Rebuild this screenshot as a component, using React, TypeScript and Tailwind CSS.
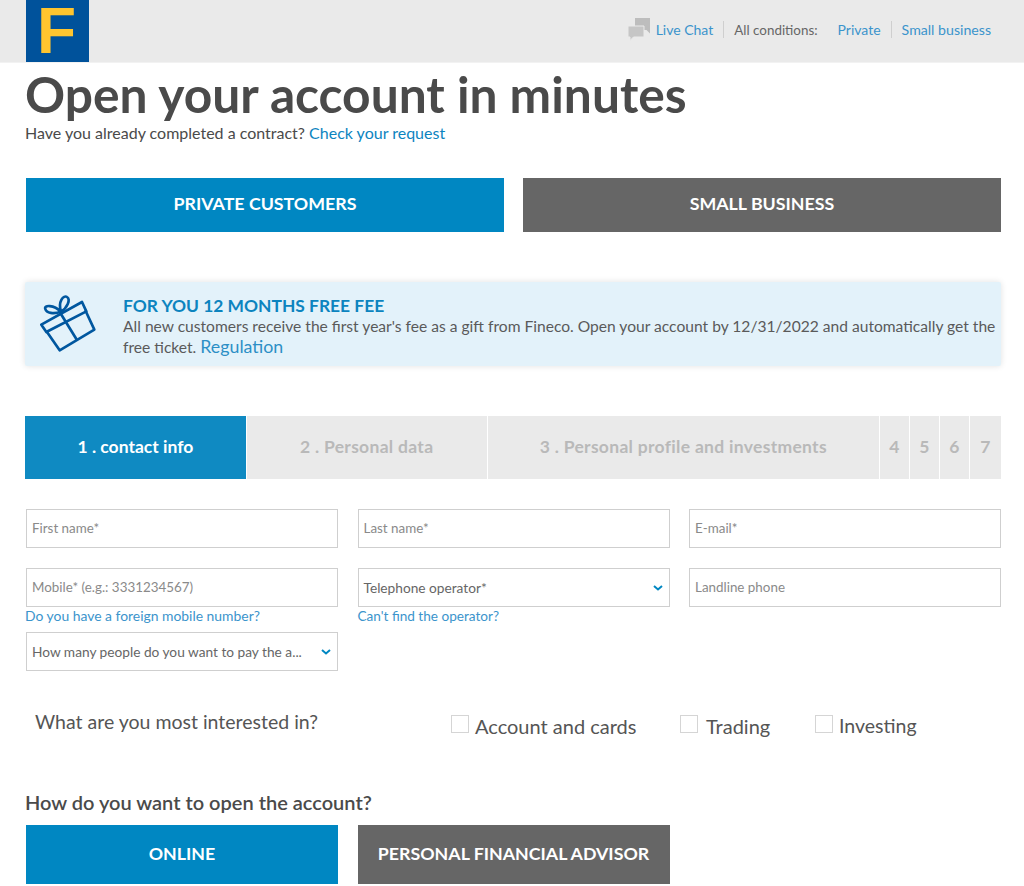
const font = { fontFamily: 'Lato, "Open Sans", "Liberation Sans", sans-serif' };

function ChevronDown() {
  return (
    <svg width="10" height="7" viewBox="0 0 10 7" className="absolute right-[6px] top-1/2 -translate-y-1/2">
      <path d="M1 1.5 L5 5 L9 1.5" fill="none" stroke="#0087c2" strokeWidth="2" />
    </svg>
  );
}

function ChatIcon() {
  return (
    <svg width="22" height="23" viewBox="0 0 22 23" className="mr-[6px] -mt-[1px]">
      <path d="M7 0 H22 V15.5 L18.5 12 H7 Z" fill="#bdbdbd" />
      <path d="M0 8 H16 V19 H5.5 L2 22.5 V19 H0 Z" fill="#c6c6c6" stroke="#eaeaea" strokeWidth="1" />
    </svg>
  );
}

function GiftIcon() {
  return (
    <svg width="60" height="60" viewBox="110 70 180 180" className="shrink-0 -mt-[2px]">
      <g fill="none" stroke="#00579f" strokeWidth="8" strokeLinejoin="round" strokeLinecap="round">
        <path d="M123 165 L245 97 L258 125 L138 187 Z" />
        <path d="M140 187 L178 242 L282 180 L256 124" />
        <path d="M180 130 L228 208" />
        <path d="M182 126 C160 105 130 105 135 118 C138 130 160 134 182 126 Z" />
        <path d="M182 126 C172 95 190 75 200 82 C212 90 200 115 182 126 Z" />
      </g>
    </svg>
  );
}

function TextInput({ placeholder }: { placeholder: string }) {
  return (
    <input
      placeholder={placeholder}
      className="w-full h-[39px] border border-[#cfcfcf] bg-white px-[5px] pb-[1px] text-[13.4px] outline-none placeholder:text-[#8a8a8a]"
    />
  );
}

function SelectBox({ label }: { label: string }) {
  return (
    <div className="relative w-full h-[39px] border border-[#cfcfcf] bg-white pl-[5px] pr-[20px] pt-[1px] flex items-center text-[13.7px] text-[#666] whitespace-nowrap">
      {label}
      <ChevronDown />
    </div>
  );
}

function Check({ label, className, labelClass }: { label: string; className: string; labelClass: string }) {
  return (
    <div className={"flex items-start " + className}>
      <span className="w-[18px] h-[18px] border border-[#d5d5d5] mr-[6px]" />
      <span className={"leading-[24px] text-[#555] -mt-[1px] " + labelClass}>{label}</span>
    </div>
  );
}

const tabs = [
  { label: "2 . Personal data", w: "w-[240px]" },
  { label: "3 . Personal profile and investments", w: "w-[392px]" },
  { label: "4", w: "w-[29px]" },
  { label: "5", w: "w-[29px]" },
  { label: "6", w: "w-[29px]" },
  { label: "7", w: "w-[31px]" },
];

export default function App() {
  return (
    <div className="min-h-[886px] bg-white overflow-hidden" style={font}>
      <header className="h-[63px] bg-[#eaeaea] border-b border-[#f2f2f2] pl-[26px] pr-[33px] flex items-start justify-between">
        <div className="w-[63px] h-[62px] bg-[#00529b] flex items-center justify-center pr-[2px] text-[#ffc52f] text-[64px] font-bold leading-none" style={{ fontFamily: '"Liberation Sans", sans-serif' }}>
          F
        </div>
        <div className="h-[59px] flex items-center text-[14px] text-[#3b94cc]">
          <ChatIcon />
          <span>Live Chat</span>
          <span className="w-px h-[17px] bg-[#cfcfcf] mx-[10px]" />
          <span className="text-[#666] text-[13.4px] mr-[20px] pt-[1px]">All conditions:</span>
          <span>Private</span>
          <span className="w-px h-[17px] bg-[#cfcfcf] mx-[10px]" />
          <span className="text-[14.15px]">Small business</span>
        </div>
      </header>

      <main className="pl-[26px]">
        <h1 className="text-[49.7px] leading-[62px] font-bold text-[#4a4a4a] -ml-px">Open your account in minutes</h1>
        <p className="text-[16px] leading-[20px] text-[#4a4a4a] -mt-[2px] -ml-px">
          Have you already completed a contract? <span className="text-[#0c84bf]">Check your request</span>
        </p>

        <div className="mt-[35px] grid grid-cols-2 gap-[19px] w-[975px]">
          <div className="h-[54px] pb-[3px] bg-[#0087c2] text-white font-bold text-[17.8px] flex items-center justify-center">PRIVATE CUSTOMERS</div>
          <div className="h-[54px] pb-[3px] bg-[#666666] text-white font-bold text-[17.8px] flex items-center justify-center">SMALL BUSINESS</div>
        </div>

        <div className="mt-[50px] w-[976px] -ml-px h-[84px] bg-[#e3f2fa] rounded-[2px] shadow-[0_0_6px_rgba(0,0,0,0.12)] flex items-center pl-[12px] pr-[5px]">
          <GiftIcon />
          <div className="ml-[26px] mt-[4px]">
            <div className="text-[17.4px] leading-[20px] font-bold text-[#0c84bf]">FOR YOU 12 MONTHS FREE FEE</div>
            <div className="text-[15.6px] leading-[20px] text-[#5a5a5a]">
              All new customers receive the first year's fee as a gift from Fineco. Open your account by 12/31/2022 and automatically get the free ticket.{" "}
              <span className="text-[17.8px] text-[#2c8fc6]">Regulation</span>
            </div>
          </div>
        </div>

        <div className="mt-[50px] w-[976px] -ml-px h-[63px] flex gap-px">
          <div className="w-[221px] bg-[#0f8ac2] text-white font-bold text-[17.5px] flex items-center justify-center">1 . contact info</div>
          {tabs.map((t) => (
            <div key={t.label} className={t.w + " bg-[#eaeaea] text-[#b9b9b9] font-bold text-[17.5px] tracking-[0.3px] flex items-center justify-center"}>
              {t.label}
            </div>
          ))}
        </div>

        <div className="mt-[30px] grid grid-cols-[312px_312px_312px] gap-x-[19.5px] w-[975px]">
          <TextInput placeholder="First name*" />
          <TextInput placeholder="Last name*" />
          <TextInput placeholder="E-mail*" />

          <div className="mt-[20px]">
            <TextInput placeholder="Mobile* (e.g.: 3331234567)" />
            <div className="text-[13.9px] leading-[18px] text-[#3b94cc] -ml-px">Do you have a foreign mobile number?</div>
          </div>
          <div className="mt-[20px]">
            <SelectBox label="Telephone operator*" />
            <div className="text-[13.6px] leading-[18px] text-[#3b94cc]">Can't find the operator?</div>
          </div>
          <div className="mt-[20px]">
            <TextInput placeholder="Landline phone" />
          </div>

          <div className="mt-[7px]">
            <SelectBox label="How many people do you want to pay the a..." />
          </div>
        </div>

        <div className="mt-[44px] flex items-start w-[975px] h-[40px]">
          <div className="ml-[9px] w-[416px] text-[19.5px] leading-[30px] text-[#555] -mt-[8px]">What are you most interested in?</div>
          <Check label="Account and cards" className="w-[229px]" labelClass="text-[20px]" />
          <Check label="Trading" className="w-[135px]" labelClass="text-[20px] ml-[2px]" />
          <Check label="Investing" className="w-[110px]" labelClass="text-[19.5px]" />
        </div>

        <div className="mt-[34px] text-[20px] leading-[26px] font-semibold text-[#4a4a4a] -ml-px">How do you want to open the account?</div>
        <div className="mt-[10px] grid grid-cols-[312px_312px] gap-x-[19.5px]">
          <div className="h-[59px] pb-[2px] bg-[#0087c2] text-white font-bold text-[17.8px] flex items-center justify-center">ONLINE</div>
          <div className="h-[59px] pb-[2px] bg-[#666666] text-white font-bold text-[17.8px] flex items-center justify-center whitespace-nowrap">PERSONAL FINANCIAL ADVISOR</div>
        </div>
      </main>
    </div>
  );
}
